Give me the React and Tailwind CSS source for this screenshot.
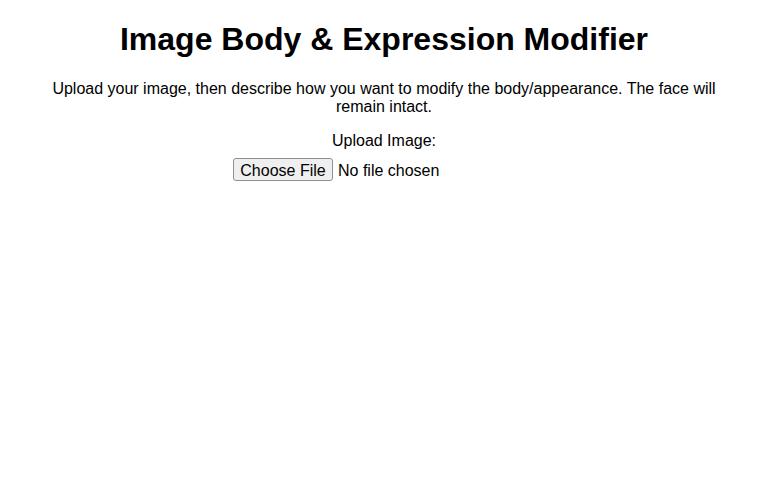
export default function App() {
  return (
    <div className="min-h-[480px] bg-white px-[40px] text-center font-['Liberation_Sans',Arial,sans-serif] text-black">
      {/* Header */}
      <h1 className="mt-[21px] mb-[22px] text-[32px] leading-[37px] font-bold">
        Image Body &amp; Expression Modifier
      </h1>
      <p className="text-base leading-[18px]">
        Upload your image, then describe how you want to modify the body/appearance. The face will remain intact.
      </p>

      {/* Upload */}
      <div className="mt-4 flex flex-col items-center">
        <label htmlFor="upload" className="block text-base leading-[18px]">
          Upload Image:
        </label>
        <input
          id="upload"
          type="file"
          accept="image/*"
          className="mt-2 w-[302px] text-left text-base leading-[18px] file:mr-[5px] file:h-[23px] file:w-[100px] file:rounded-[3px] file:border file:border-[#8f8f8f] file:bg-[#efefef] file:text-base file:text-black"
        />
      </div>
    </div>
  );
}
